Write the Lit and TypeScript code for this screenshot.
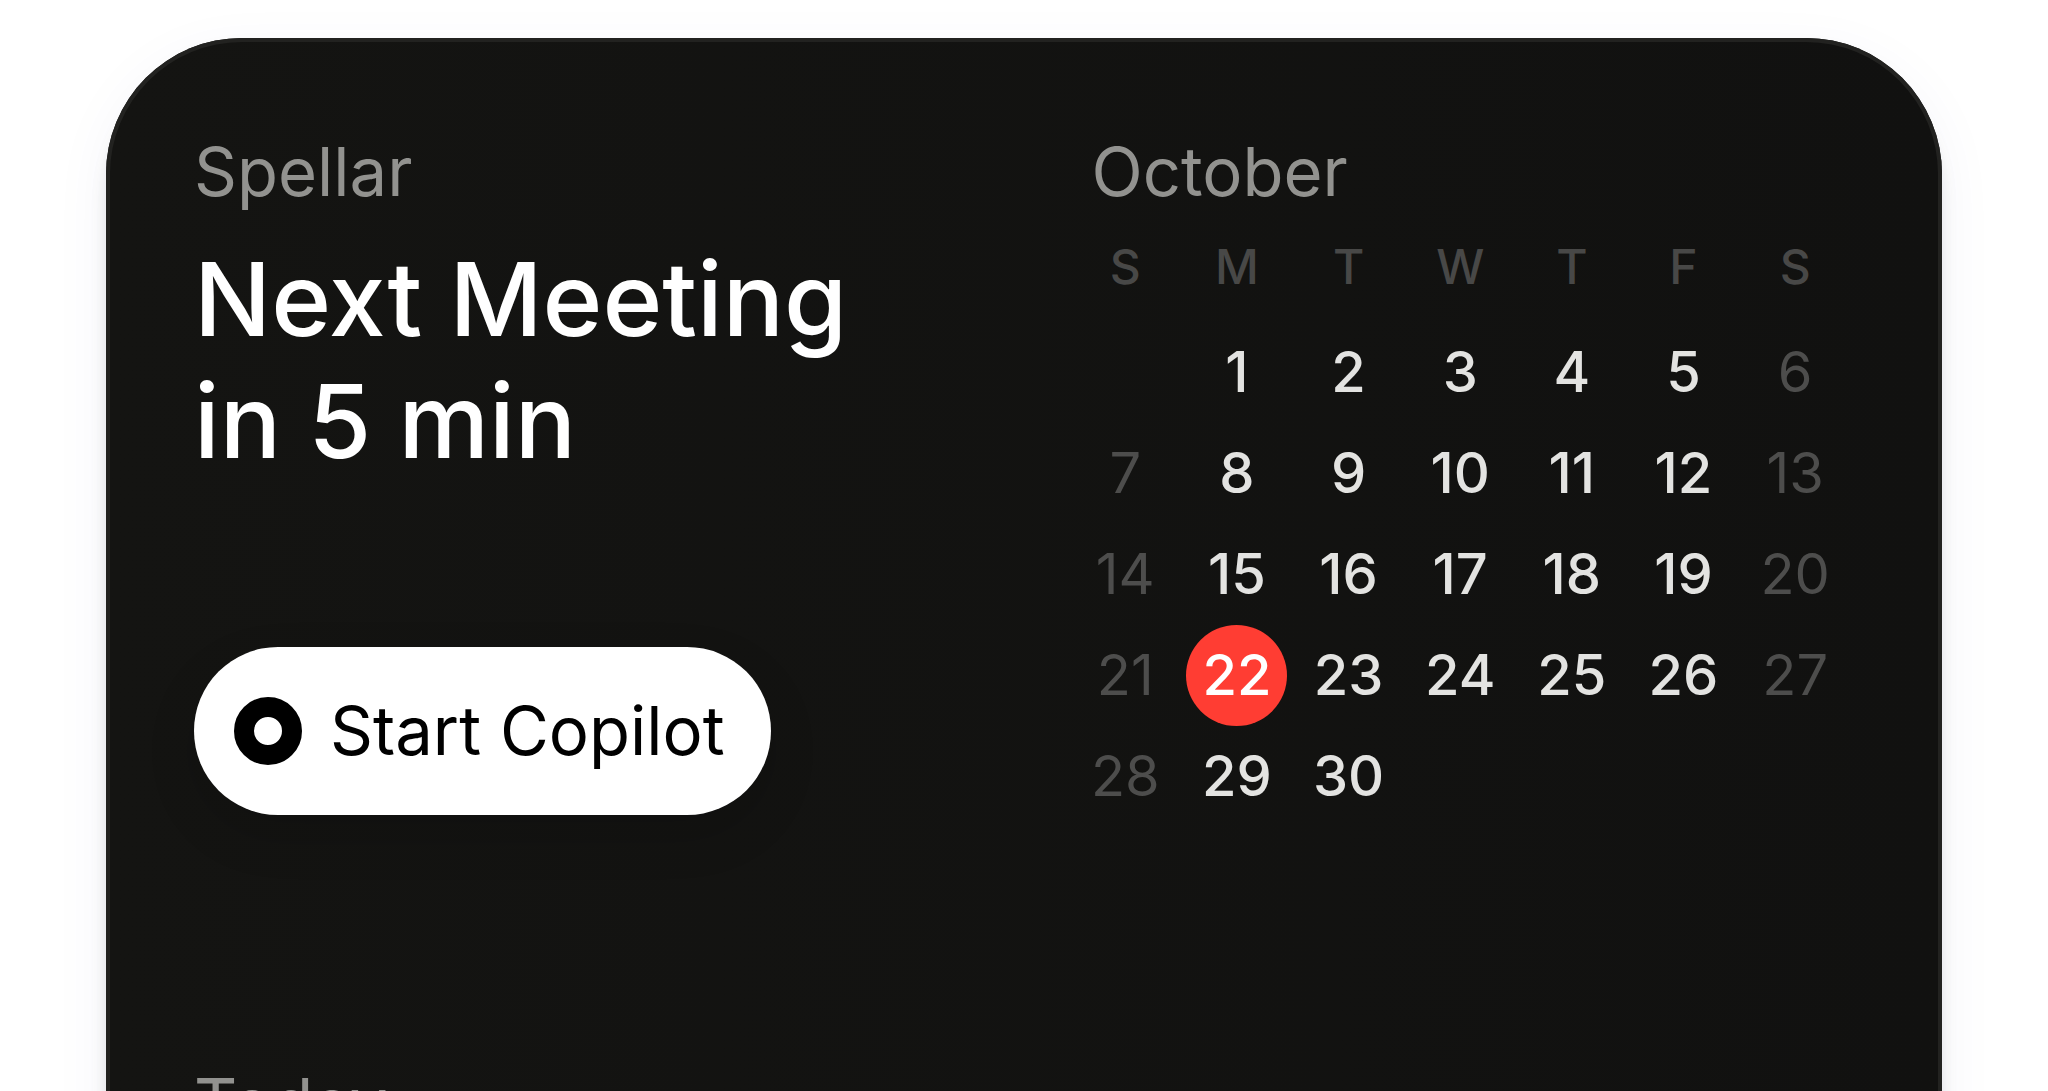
import { LitElement, html, css, svg } from "lit";
import { customElement, property } from "lit/decorators.js";
import { classMap } from "lit/directives/class-map.js";

const recordIcon = svg`
  <circle cx="34" cy="34" r="24" fill="none" stroke="currentColor" stroke-width="20"></circle>
`;

@customElement("month-calendar")
export class MonthCalendar extends LitElement {
  @property() month = "";
  @property({ type: Number }) days = 30;
  @property({ type: Number }) offset = 1;
  @property({ type: Number }) today = 0;

  static styles = css`
    :host {
      display: block;
    }
    .month {
      margin: 0;
      padding-left: 22px;
      font-size: 67px;
      line-height: 80px;
      font-weight: 400;
      color: #92928f;
    }
    .grid {
      width: 100%;
      table-layout: fixed;
      border-collapse: collapse;
    }
    .weekday {
      height: 110px;
      padding: 0;
      font-size: 48px;
      line-height: 110px;
      font-weight: 500;
      color: #484847;
      text-align: center;
    }
    .day {
      height: 101px;
      padding: 0;
      font-size: 56px;
      line-height: 101px;
      font-weight: 500;
      color: #e3e3e1;
      text-align: center;
    }
    .weekend {
      font-weight: 400;
      color: #4d4d4c;
    }
    .label {
      display: block;
      width: 101px;
      height: 101px;
      margin: 0 auto;
      border-radius: 50%;
    }
    .today {
      background: #ff3d33;
      color: #ffffff;
    }
  `;

  private weeks(): number[][] {
    const count = Math.ceil((this.days + this.offset) / 7);
    return Array.from({ length: count }, (_, week) =>
      Array.from({ length: 7 }, (_, column) => {
        const day = week * 7 + column + 1 - this.offset;
        return day > 0 && day <= this.days ? day : 0;
      })
    );
  }

  private renderDay(day: number, column: number) {
    const cell = { day: true, weekend: column === 0 || column === 6 };
    const label = { label: true, today: day === this.today };
    return html`<td class=${classMap(cell)}>
      ${day ? html`<span class=${classMap(label)}>${day}</span>` : ""}
    </td>`;
  }

  render() {
    return html`
      <h2 class="month" id="month">${this.month}</h2>
      <table class="grid" aria-labelledby="month">
        <thead>
          <tr>
            ${["S", "M", "T", "W", "T", "F", "S"].map(
              (name) => html`<th class="weekday" scope="col">${name}</th>`
            )}
          </tr>
        </thead>
        <tbody>
          ${this.weeks().map(
            (week) => html`<tr>${week.map((day, column) => this.renderDay(day, column))}</tr>`
          )}
        </tbody>
      </table>
    `;
  }
}

@customElement("app-root")
export class AppRoot extends LitElement {
  static styles = css`
    :host {
      display: block;
      box-sizing: border-box;
      height: 100vh;
      overflow: hidden;
      padding: 38px 106px 0;
      background: #ffffff;
      font-family: Inter, "Liberation Sans", sans-serif;
    }
    .card {
      box-sizing: border-box;
      padding: 94px 91px 120px 88px;
      border-radius: 136px;
      background: linear-gradient(90deg, #141412, #111110);
      box-shadow:
        inset 0 0 0 4px #222220,
        0 24px 16px rgba(40, 50, 70, 0.12),
        0 16px 60px rgba(60, 60, 140, 0.05);
    }
    .top {
      display: grid;
      grid-template-columns: 876fr 782fr;
      align-items: start;
    }
    .app-name,
    .section {
      margin: 0;
      font-size: 67px;
      line-height: 80px;
      font-weight: 400;
      color: #92928f;
    }
    .headline {
      margin: 26px 0 0;
      font-size: 102px;
      line-height: 122px;
      font-weight: 500;
      color: #ffffff;
    }
    .line {
      display: block;
    }
    .start {
      display: inline-flex;
      align-items: center;
      gap: 28px;
      height: 168px;
      margin-top: 165px;
      padding: 0 46px 0 40px;
      border: 0;
      border-radius: 84px;
      background: #ffffff;
      box-shadow: 0 20px 48px rgba(0, 0, 0, 0.15);
      color: #000000;
      font-family: inherit;
      font-size: 67px;
      line-height: 80px;
      font-weight: 400;
      white-space: nowrap;
      cursor: pointer;
    }
    .record {
      display: block;
      width: 68px;
      height: 68px;
    }
    .agenda {
      padding-top: 236px;
    }
  `;

  render() {
    return html`
      <main class="card">
        <div class="top">
          <section>
            <p class="app-name">Spellar</p>
            <h1 class="headline">
              <span class="line">Next Meeting</span>
              <span class="line">in 5 min</span>
            </h1>
            <button class="start" type="button">
              <svg class="record" viewBox="0 0 68 68" aria-hidden="true">${recordIcon}</svg>
              Start Copilot
            </button>
          </section>
          <month-calendar month="October" days="30" offset="1" today="22"></month-calendar>
        </div>
        <section class="agenda">
          <h2 class="section">Today</h2>
        </section>
      </main>
    `;
  }
}
